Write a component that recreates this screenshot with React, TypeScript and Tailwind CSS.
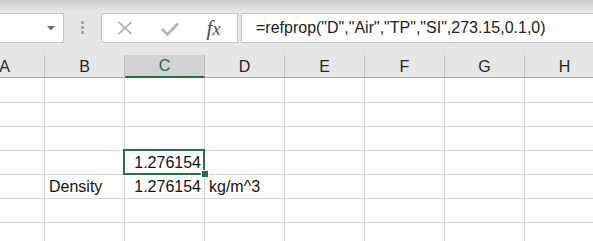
import React from "react";

const cols = ["A", "B", "C", "D", "E", "F", "G", "H"];

function Cell({
  col,
  children,
  align = "left",
}: {
  col: number;
  children?: React.ReactNode;
  align?: "left" | "right";
}) {
  const w = col === 0 ? "w-[80px] ml-[-35px]" : "w-[80px]";
  return (
    <div
      className={`${w} shrink-0 h-full border-r border-[#d4d4d4] flex items-end overflow-visible whitespace-nowrap ${
        align === "right" ? "justify-end pr-[3px]" : "justify-start pl-[4px]"
      } pb-[2px] leading-[18px]`}
    >
      {children}
    </div>
  );
}

function Row({
  first,
  cells,
}: {
  first?: boolean;
  cells?: { [k: number]: { text: string; align?: "left" | "right" } };
}) {
  return (
    <div
      className={`flex shrink-0 border-b border-[#d4d4d4] ${
        first ? "h-[25px]" : "h-[24px]"
      }`}
    >
      {cols.map((_, i) => (
        <Cell key={i} col={i} align={cells?.[i]?.align}>
          {cells?.[i]?.text}
        </Cell>
      ))}
    </div>
  );
}

export default function App() {
  return (
    <div
      className="relative w-[593px] h-[241px] overflow-hidden bg-white text-[#1f1f1f]"
      style={{ fontFamily: '"Liberation Sans", Arial, sans-serif' }}
    >
      {/* Toolbar */}
      <div className="h-[55px] flex items-start bg-[linear-gradient(to_bottom,#cecece_0px,#e6e6e6_12px,#e6e6e6_100%)]">
        {/* Name box */}
        <div className="mt-[13px] ml-[-1px] w-[65px] h-[30px] bg-white border border-[#c6c6c6] flex items-center justify-end pr-[8px]">
          <svg width="8" height="5" viewBox="0 0 8 5">
            <polygon points="0,0 8,0 4,4.5" fill="#6f6f6f" />
          </svg>
        </div>
        {/* Dots */}
        <div className="w-[37px] h-[55px] flex flex-col items-center pt-[21px] gap-[2px]">
          <div className="w-[3px] h-[3px] bg-[#a6a6a6]" />
          <div className="w-[3px] h-[3px] bg-[#a6a6a6]" />
          <div className="w-[3px] h-[3px] bg-[#a6a6a6]" />
        </div>
        {/* Buttons */}
        <div className="mt-[13px] w-[137px] h-[30px] bg-white border border-[#c6c6c6] flex">
          <div className="w-[45px] h-full flex items-center justify-center">
            <svg width="16" height="14" viewBox="0 0 16 14">
              <path d="M1.5 1 L14.5 13 M14.5 1 L1.5 13" stroke="#a9a9a9" strokeWidth="1.6" fill="none" />
            </svg>
          </div>
          <div className="w-[45px] h-full flex items-center justify-center pt-[1px]">
            <svg width="18" height="14" viewBox="0 0 18 14">
              <path d="M1 7 L6.5 12.5 L17 1.5" stroke="#b4b4b4" strokeWidth="2.6" fill="none" />
            </svg>
          </div>
          <div className="w-[45px] h-full flex items-center justify-center">
            <span
              className="italic text-[21px] leading-none text-[#4d4d4d] pr-[2px]"
              style={{ fontFamily: '"Liberation Serif", "Times New Roman", serif' }}
            >
              f<span className="text-[18px]">x</span>
            </span>
          </div>
        </div>
        {/* Formula bar */}
        <div className="mt-[13px] ml-[3px] flex-1 h-[30px] bg-white border-y border-l border-[#c6c6c6] flex items-center pl-[14px] text-[16px] whitespace-nowrap text-[#222]">
          =refprop("D","Air","TP","SI",273.15,0.1,0)
        </div>
      </div>

      {/* Column headers */}
      <div className="flex h-[23px] bg-[#e6e6e6]">
        {cols.map((c, i) => (
          <div
            key={c}
            className={`${i === 0 ? "ml-[-35px]" : ""} w-[80px] justify-center shrink-0 h-full flex items-center pt-[1px] text-[16px] border-r ${
              i === 2
                ? "bg-[#d2d2d2] text-[#217346] border-[#b9b9b9] border-b-2 border-b-[#217346]"
                : "text-[#262626] border-[#c3c3c3] border-b border-b-[#ababab]"
            }`}
          >
            {c}
          </div>
        ))}
      </div>

      {/* Grid */}
      <div className="text-[16px] text-[#111]">
        <Row first />
        <Row />
        <Row />
        <Row cells={{ 2: { text: "1.276154", align: "right" } }} />
        <Row
          cells={{
            1: { text: "Density" },
            2: { text: "1.276154", align: "right" },
            3: { text: "kg/m^3" },
          }}
        />
        <Row />
        <Row />
      </div>

      {/* Selection */}
      <div className="absolute left-[123px] top-[149px] w-[82px] h-[26px] border-2 border-[#217346] pointer-events-none" />
      <div className="absolute left-[202px] top-[171px] w-[6px] h-[6px] bg-[#217346] border border-white box-content -m-px" />
    </div>
  );
}
